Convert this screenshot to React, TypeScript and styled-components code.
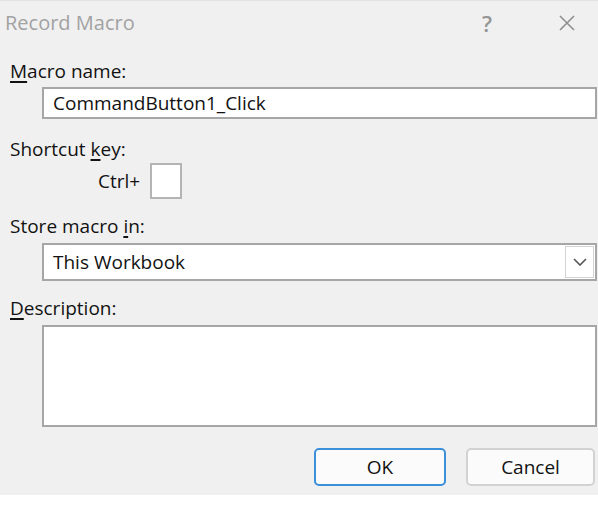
import styled, { createGlobalStyle } from "styled-components";

const GlobalStyle = createGlobalStyle`
  html, body {
    margin: 0;
    padding: 0;
    background: #ffffff;
  }
  body {
    font-family: "Open Sans", "Noto Sans", "Liberation Sans", sans-serif;
    color: #121212;
  }
`;

const Dialog = styled.div`
  width: 598px;
  height: 495px;
  box-sizing: border-box;
  background: #f0f0f0;
  border-top: 1px solid #e2e2e2;
  display: flex;
  flex-direction: column;
`;

const TitleBar = styled.div`
  height: 43px;
  display: flex;
  align-items: center;
  gap: 18px;
  padding-left: 5px;
`;

const Title = styled.div`
  flex: 1;
  font-size: 20px;
  color: #a2a2a2;
`;

const TitleButton = styled.div`
  width: 62px;
  display: flex;
  justify-content: center;
  align-items: center;
  color: #959595;
  font-size: 22px;
  font-weight: 600;
`;

const Body = styled.div`
  flex: 1;
  display: flex;
  flex-direction: column;
  padding: 16px 1px 9px 10px;
`;

const Label = styled.div<{ $gap?: number }>`
  font-size: 19px;
  line-height: 22px;
  margin-top: ${(p) => p.$gap ?? 0}px;
  u {
    text-decoration-thickness: 2px;
    text-underline-offset: 3px;
  }
`;

const Field = styled.div<{ $height: number; $gap: number }>`
  margin-left: 32px;
  margin-top: ${(p) => p.$gap}px;
  height: ${(p) => p.$height}px;
  box-sizing: border-box;
  background: #ffffff;
  border: 2px solid #a6a6a6;
  display: flex;
  align-items: center;
  font-size: 19px;
  padding-left: 9px;
`;

const FieldText = styled.span`
  flex: 1;
`;

const DropButton = styled.div`
  width: 29px;
  height: 32px;
  margin-right: 1px;
  box-sizing: border-box;
  border: 1px solid #d4d4d4;
  display: flex;
  align-items: center;
  justify-content: center;
`;

const ShortcutRow = styled.div`
  margin-top: 3px;
  margin-left: 88px;
  display: flex;
  align-items: center;
  gap: 10px;
  font-size: 19px;
`;

const KeyBox = styled.div`
  width: 32px;
  height: 36px;
  box-sizing: border-box;
  background: #ffffff;
  border: 2px solid #b4b4b4;
`;

const Buttons = styled.div`
  margin-top: 21px;
  display: flex;
  justify-content: flex-end;
  gap: 20px;
  padding-right: 2px;
`;

const Button = styled.div<{ $primary?: boolean; $width: number }>`
  width: ${(p) => p.$width}px;
  height: 38px;
  box-sizing: border-box;
  border-radius: 5px;
  background: #fbfbfb;
  border: 2px solid ${(p) => (p.$primary ? "#3c8fd9" : "#d2d2d2")};
  display: flex;
  align-items: center;
  justify-content: center;
  font-size: 19px;
`;

export default function App() {
  return (
    <>
      <GlobalStyle />
      <Dialog>
        <TitleBar>
          <Title>Record Macro</Title>
          <TitleButton>?</TitleButton>
          <TitleButton>
            <svg width="16" height="16" viewBox="0 0 16 16">
              <path d="M1 1L15 15M15 1L1 15" stroke="#8f8f8f" strokeWidth="1.6" />
            </svg>
          </TitleButton>
        </TitleBar>
        <Body>
          <Label>
            <u>M</u>acro name:
          </Label>
          <Field $height={32} $gap={5}>
            <FieldText>CommandButton1_Click</FieldText>
          </Field>

          <Label $gap={19}>
            Shortcut <u>k</u>ey:
          </Label>
          <ShortcutRow>
            <span>Ctrl+</span>
            <KeyBox />
          </ShortcutRow>

          <Label $gap={16}>
            Store macro <u>i</u>n:
          </Label>
          <Field $height={38} $gap={6}>
            <FieldText>This Workbook</FieldText>
            <DropButton>
              <svg width="14" height="8" viewBox="0 0 14 8">
                <path d="M1 1L7 7L13 1" fill="none" stroke="#555" strokeWidth="1.6" />
              </svg>
            </DropButton>
          </Field>

          <Label $gap={16}>
            <u>D</u>escription:
          </Label>
          <Field $height={102} $gap={6} />

          <Buttons>
            <Button $primary $width={132}>
              OK
            </Button>
            <Button $width={129}>Cancel</Button>
          </Buttons>
        </Body>
      </Dialog>
    </>
  );
}
